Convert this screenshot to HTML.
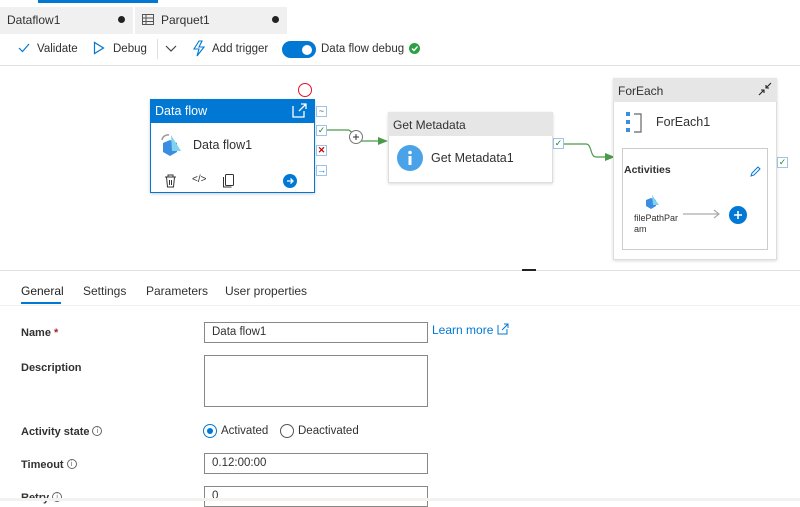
<!DOCTYPE html>
<html><head><style>
*{box-sizing:border-box;margin:0;padding:0}
body{width:800px;height:501px;overflow:hidden;background:#fff;font-family:"Liberation Sans",sans-serif;color:#323130;position:relative;font-size:12px}
.a{position:absolute}
.inp{position:absolute;border:1px solid #8a8886;background:#fff;height:21px;left:204px;width:224px;font-size:11.5px;padding:3px 7px}
.lbl{position:absolute;left:21px;font-size:11px;font-weight:bold;color:#323130}
.ic{display:inline-block;width:10px;height:10px;border:1px solid #666;border-radius:50%;font-size:7px;text-align:center;line-height:9px;font-weight:normal;color:#666;vertical-align:top;margin-left:3px}
.port{position:absolute;width:11px;height:11px;border:1px solid #9dc3e6;background:#fff;font-size:9px;line-height:9px;text-align:center}
</style></head><body>
<div class="a" style="left:38px;top:0;width:120px;height:3px;background:#0078d4"></div>
<div class="a" style="left:0;top:7px;width:287px;height:27px;background:#f0f0f0"></div>
<div class="a" style="left:133px;top:7px;width:2px;height:27px;background:#fff"></div>
<div class="a" style="left:7px;top:13px;font-size:12px">Dataflow1</div>
<div class="a" style="left:118px;top:16px;width:7px;height:7px;border-radius:50%;background:#222"></div>
<svg class="a" style="left:142px;top:14px" width="12" height="11"><rect x=".5" y=".5" width="11" height="10" fill="none" stroke="#555"/><path d="M0 4h12M0 7.5h12M4 0v11" stroke="#555"/></svg>
<div class="a" style="left:161px;top:13px;font-size:12px">Parquet1</div>
<div class="a" style="left:272px;top:16px;width:7px;height:7px;border-radius:50%;background:#222"></div>
<div class="a" style="left:0;top:65px;width:800px;height:1px;background:#e1dfdd"></div>
<svg class="a" style="left:18px;top:43px" width="12" height="10"><path d="M1 5l3.5 3.5L11 1" fill="none" stroke="#0078d4" stroke-width="1.2"/></svg>
<div class="a" style="left:37px;top:43px;font-size:11.5px">Validate</div>
<svg class="a" style="left:93px;top:41px" width="12" height="14"><path d="M1.5 1.5v11l9-5.5z" fill="none" stroke="#0078d4" stroke-width="1.2"/></svg>
<div class="a" style="left:113px;top:43px;font-size:11.5px">Debug</div>
<div class="a" style="left:157px;top:39px;width:1px;height:20px;background:#e1dfdd"></div>
<svg class="a" style="left:165px;top:45px" width="12" height="8"><path d="M1 1l5 5 5-5" fill="none" stroke="#444" stroke-width="1.2"/></svg>
<svg class="a" style="left:191px;top:40px" width="16" height="17"><path d="M8 1L3 9h5l-2 7 7-9H8l3-6z" fill="none" stroke="#0078d4" stroke-width="1.1"/></svg>
<div class="a" style="left:212px;top:43px;font-size:11.5px">Add trigger</div>
<div class="a" style="left:282px;top:41px;width:34px;height:17px;border-radius:9px;background:#0078d4"></div>
<div class="a" style="left:302px;top:45px;width:10px;height:10px;border-radius:50%;background:#fff"></div>
<div class="a" style="left:321px;top:43px;font-size:11.5px">Data flow debug</div>
<svg class="a" style="left:409px;top:43px" width="11" height="11"><circle cx="5.5" cy="5.5" r="5.5" fill="#2ea043"/><path d="M3 5.5l2 2 3.5-4" fill="none" stroke="#fff" stroke-width="1.4"/></svg>

<div class="a" style="left:298px;top:83px;width:14px;height:14px;border:1.5px solid #e81123;border-radius:50%"></div>
<div class="a" style="left:150px;top:99px;width:165px;height:94px;border:1px solid #0078d4;background:#fff;box-shadow:0 1px 3px rgba(0,0,0,.2)"></div>
<div class="a" style="left:150px;top:99px;width:165px;height:24px;background:#0078d4;color:#fff;font-size:12.5px;padding:5px 5px">Data flow</div>
<svg class="a" style="left:292px;top:103px" width="15" height="15"><path d="M1 3v11h11V8M7 8l7-7M9 1h5v5" fill="none" stroke="#fff" stroke-width="1.3"/></svg>
<svg class="a" style="left:158px;top:131px" width="28" height="28"><path d="M5 12 L12 9 L19 12 L19 21 L12 25 L5 21z" fill="#3b8de0"/><path d="M13 4l10 16h-9z" fill="#7fd3f0"/><path d="M4 9a6 6 0 0 1 7-5" fill="none" stroke="#999" stroke-width="1.5"/></svg>
<div class="a" style="left:193px;top:138px;font-size:12.5px">Data flow1</div>
<svg class="a" style="left:164px;top:174px" width="13" height="14"><path d="M1 3h11M4 3V1h5v2M2.5 3l1 10h6l1-10M5.5 6v5M7.5 6v5" fill="none" stroke="#333" stroke-width="1"/></svg>
<div class="a" style="left:192px;top:174px;font-size:10px">&lt;/&gt;</div>
<svg class="a" style="left:222px;top:173px" width="13" height="15"><rect x="3.5" y="1.5" width="8" height="11" rx="1" fill="none" stroke="#333"/><path d="M1.5 4v10h8" fill="none" stroke="#333"/></svg>
<svg class="a" style="left:283px;top:174px" width="14" height="14"><circle cx="7" cy="7" r="7" fill="#0078d4"/><path d="M4 7h6M7.5 4.5L10 7l-2.5 2.5" fill="none" stroke="#fff" stroke-width="1.3"/></svg>
<div class="port" style="left:316px;top:106px;color:#555">~</div>
<div class="port" style="left:316px;top:125px;color:#2e7d32">✓</div>
<div class="port" style="left:316px;top:145px;color:#c00;font-weight:bold">✕</div>
<div class="port" style="left:316px;top:165px;color:#0078d4">→</div>
<svg class="a" style="left:326px;top:124px" width="64" height="24"><path d="M1 6h22M33 17h20" stroke="#4a9a4a" stroke-width="1.2" fill="none"/><path d="M23 6l6 5v6h4" stroke="#4a9a4a" stroke-width="1.2" fill="none"/><circle cx="30" cy="13" r="6.5" fill="#fff" stroke="#777"/><path d="M27 13h6M30 10v6" stroke="#333"/><path d="M52 13l10 4-10 4z" fill="#4a9a4a"/></svg>

<div class="a" style="left:388px;top:112px;width:165px;height:71px;border:1px solid #ddd;background:#fff;box-shadow:0 1px 3px rgba(0,0,0,.15)"></div>
<div class="a" style="left:388px;top:112px;width:165px;height:24px;background:#e6e6e6;font-size:12px;padding:6px 5px">Get Metadata</div>
<svg class="a" style="left:397px;top:145px" width="26" height="26"><circle cx="13" cy="13" r="13" fill="#4aa3e8"/><rect x="11.5" y="11" width="3" height="9" fill="#fff"/><circle cx="13" cy="7.5" r="1.8" fill="#fff"/></svg>
<div class="a" style="left:431px;top:151px;font-size:12.5px">Get Metadata1</div>
<div class="port" style="left:553px;top:138px;color:#2e7d32">✓</div>
<svg class="a" style="left:563px;top:140px" width="52" height="22"><path d="M1 4h22c6 0 4 13 10 13h10" stroke="#4a9a4a" stroke-width="1.2" fill="none"/><path d="M42 13l10 4-10 4z" fill="#4a9a4a"/></svg>

<div class="a" style="left:613px;top:78px;width:164px;height:182px;border:1px solid #ddd;background:#fff;box-shadow:0 1px 3px rgba(0,0,0,.15)"></div>
<div class="a" style="left:613px;top:78px;width:164px;height:24px;background:#e6e6e6;font-size:12px;padding:6px 5px">ForEach</div>
<svg class="a" style="left:758px;top:82px" width="14" height="14"><path d="M1 13l5-5M3 8h3v3M13 1L8 6M8 3v3h3" fill="none" stroke="#222" stroke-width="1.1"/></svg>
<svg class="a" style="left:625px;top:111px" width="18" height="22"><rect x="1" y="1" width="4" height="4" fill="#3b8de0"/><rect x="1" y="9" width="4" height="4" fill="#3b8de0"/><rect x="1" y="17" width="4" height="4" fill="#3b8de0"/><path d="M9 3h7v18H9" fill="none" stroke="#666" stroke-width="1.2"/></svg>
<div class="a" style="left:656px;top:115px;font-size:12.5px">ForEach1</div>
<div class="a" style="left:622px;top:148px;width:146px;height:102px;border:1px solid #ccc"></div>
<div class="a" style="left:624px;top:164px;font-size:10.5px;font-weight:bold">Activities</div>
<svg class="a" style="left:749px;top:166px" width="12" height="12"><path d="M2 10l1-3 6-6 2 2-6 6z" fill="none" stroke="#0078d4"/></svg>
<svg class="a" style="left:643px;top:192px" width="18" height="18"><path d="M3 8l5-2 5 2v6l-5 3-5-3z" fill="#3b8de0"/><path d="M9 3l7 10h-6z" fill="#7fd3f0"/></svg>
<div class="a" style="left:634px;top:213px;font-size:9px;line-height:11px">filePathPar<br>am</div>
<svg class="a" style="left:682px;top:209px" width="40" height="10"><path d="M1 5h36M32 1l5 4-5 4" stroke="#aaa" fill="none" stroke-width="1.2"/></svg>
<svg class="a" style="left:729px;top:206px" width="18" height="18"><circle cx="9" cy="9" r="9" fill="#0078d4"/><path d="M5 9h8M9 5v8" stroke="#fff" stroke-width="1.6"/></svg>
<div class="port" style="left:777px;top:157px;color:#2e7d32">✓</div>

<div class="a" style="left:0;top:270px;width:800px;height:1px;background:#e1dfdd"></div>
<div class="a" style="left:522px;top:269px;width:14px;height:2px;background:#222"></div>

<div class="a" style="left:21px;top:284px;font-size:12px;color:#222">General</div>
<div class="a" style="left:21px;top:302px;width:40px;height:2px;background:#0078d4"></div>
<div class="a" style="left:83px;top:284px;font-size:12px">Settings</div>
<div class="a" style="left:146px;top:284px;font-size:12px">Parameters</div>
<div class="a" style="left:225px;top:284px;font-size:12px">User properties</div>
<div class="a" style="left:0;top:305px;width:800px;height:1px;background:#f0f0f0"></div>

<div class="lbl" style="top:327px">Name <span style="color:#a4262c">*</span></div>
<div class="inp" style="top:322px">Data flow1</div>
<div class="a" style="left:432px;top:323px;font-size:12px;color:#0078d4">Learn more</div>
<svg class="a" style="left:497px;top:323px" width="12" height="12"><path d="M1 2v9h9V6M5 7l6-6M7 1h4v4" fill="none" stroke="#0078d4"/></svg>
<div class="lbl" style="top:362px">Description</div>
<div class="inp" style="top:355px;height:52px"></div>
<div class="lbl" style="top:426px">Activity state<span class="ic">i</span></div>
<div class="a" style="left:203px;top:424px;width:14px;height:14px;border:1px solid #0078d4;border-radius:50%"></div>
<div class="a" style="left:207px;top:428px;width:6px;height:6px;background:#0078d4;border-radius:50%"></div>
<div class="a" style="left:221px;top:425px;font-size:11.5px">Activated</div>
<div class="a" style="left:280px;top:424px;width:14px;height:14px;border:1px solid #555;border-radius:50%"></div>
<div class="a" style="left:298px;top:425px;font-size:11.5px">Deactivated</div>
<div class="lbl" style="top:459px">Timeout<span class="ic">i</span></div>
<div class="inp" style="top:453px">0.12:00:00</div>
<div class="lbl" style="top:492px">Retry<span class="ic">i</span></div>
<div class="inp" style="top:486px">0</div>
<div class="a" style="left:0;top:498px;width:800px;height:3px;background:#f3f2f1"></div>
</body></html>
